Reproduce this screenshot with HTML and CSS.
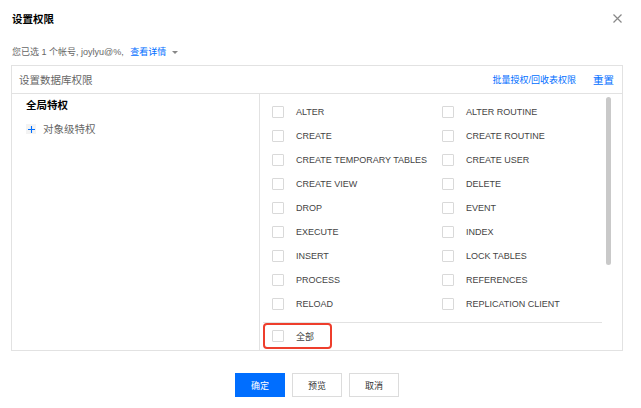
FILE: index.html
```html
<!DOCTYPE html>
<html lang="zh-CN">
  <head>
    <meta charset="UTF-8" />
    <meta name="viewport" content="width=device-width, initial-scale=1.0" />
    <title>设置权限</title>
    <link rel="stylesheet" href="styles.css">
  </head>

  <body>
    <div class="dialog">
      <header class="dialog-head">
        <h1 class="dialog-title">设置权限</h1>
        <button class="close-btn" type="button" aria-label="关闭">
          <svg width="9" height="9" viewBox="0 0 9 9">
            <path d="M0.5 0.5 L8.5 8.5 M8.5 0.5 L0.5 8.5" stroke="#888" stroke-width="1.2" fill="none" />
          </svg>
        </button>
      </header>

      <p class="account-info">
        您已选 1 个帐号, joylyu@%,
        <a href="#">查看详情</a>
        <span class="caret"></span>
      </p>

      <section class="perm-box">
        <div class="perm-box-head">
          <span>设置数据库权限</span>
          <div class="head-links">
            <a class="link-sm" href="#">批量授权/回收表权限</a>
            <a href="#">重置</a>
          </div>
        </div>

        <div class="perm-box-body">
          <!-- 左侧：权限层级 -->
          <aside class="perm-tree">
            <div class="tree-item tree-item--active">全局特权</div>
            <div class="tree-item">
              <span class="expand-icon">
                <svg width="9" height="9" viewBox="0 0 9 9">
                  <path d="M4.5 1 V8 M1 4.5 H8" stroke="#006eff" stroke-width="1.1" fill="none" />
                </svg>
              </span>
              对象级特权
            </div>
          </aside>

          <!-- 右侧：权限列表 -->
          <div class="perm-panel">
            <div class="perm-scroll">
              <ul class="perm-list">
                <li><span class="checkbox"></span>ALTER</li>
                <li><span class="checkbox"></span>ALTER ROUTINE</li>
                <li><span class="checkbox"></span>CREATE</li>
                <li><span class="checkbox"></span>CREATE ROUTINE</li>
                <li><span class="checkbox"></span>CREATE TEMPORARY TABLES</li>
                <li><span class="checkbox"></span>CREATE USER</li>
                <li><span class="checkbox"></span>CREATE VIEW</li>
                <li><span class="checkbox"></span>DELETE</li>
                <li><span class="checkbox"></span>DROP</li>
                <li><span class="checkbox"></span>EVENT</li>
                <li><span class="checkbox"></span>EXECUTE</li>
                <li><span class="checkbox"></span>INDEX</li>
                <li><span class="checkbox"></span>INSERT</li>
                <li><span class="checkbox"></span>LOCK TABLES</li>
                <li><span class="checkbox"></span>PROCESS</li>
                <li><span class="checkbox"></span>REFERENCES</li>
                <li><span class="checkbox"></span>RELOAD</li>
                <li><span class="checkbox"></span>REPLICATION CLIENT</li>
              </ul>
            </div>
            <div class="scroll-thumb"></div>
            <div class="perm-all">
              <label class="all-item"><span class="checkbox"></span>全部</label>
            </div>
          </div>
        </div>
      </section>

      <footer class="dialog-foot">
        <button class="btn btn-primary" type="button">确定</button>
        <button class="btn" type="button">预览</button>
        <button class="btn" type="button">取消</button>
      </footer>
    </div>
  </body>
</html>
```

FILE: styles.css
```css
*,
*::before,
*::after {
  box-sizing: border-box;
}
:root {
  --primary: #006eff;
  --text: #000;
  --text-body: #444;
  --text-light: #666;
  --border: #e2e2e2;
  --checkbox: #d9d9d9;
  --mark: #ee3e2c;
}
body {
  margin: 0;
  font-family: "Liberation Sans", "Noto Sans CJK SC", sans-serif;
  background: #fff;
  color: var(--text-body);
}
a {
  color: var(--primary);
  text-decoration: none;
}
ul {
  margin: 0;
  padding: 0;
  list-style: none;
}
button {
  font-family: inherit;
}

.dialog {
  padding: 10px 18px 0 11px;
}
.dialog-head {
  display: flex;
  justify-content: space-between;
  align-items: center;
  height: 16px;
}
.dialog-title {
  margin: 0 0 0 1px;
  font-size: 10.5px;
  font-weight: 700;
  color: var(--text);
}
.close-btn {
  display: flex;
  padding: 0;
  margin-right: 1px;
  border: 0;
  background: none;
}

.account-info {
  margin: 19px 0 0 1px;
  font-size: 9px;
  line-height: 14px;
  color: var(--text-light);
}
.account-info a {
  margin-left: 4px;
}
.caret {
  display: inline-block;
  margin-left: 3px;
  border-left: 3px solid transparent;
  border-right: 3px solid transparent;
  border-top: 3.5px solid #888;
  vertical-align: 1px;
}

.perm-box {
  margin-top: 6px;
  border: 1px solid var(--border);
}
.perm-box-head {
  display: flex;
  justify-content: space-between;
  align-items: center;
  height: 28px;
  padding: 0 8px 0 7px;
  border-bottom: 1px solid var(--border);
  font-size: 10.5px;
  color: var(--text-light);
}
.head-links {
  display: flex;
  align-items: center;
  gap: 17px;
}
.link-sm {
  font-size: 9px;
}
.perm-box-body {
  display: flex;
  height: 256px;
}

.perm-tree {
  flex: 0 0 248px;
  padding: 4px 0 0 14px;
  border-right: 1px solid var(--border);
  font-size: 10.5px;
  line-height: 14px;
}
.tree-item {
  display: flex;
  align-items: center;
  color: var(--text-light);
}
.tree-item + .tree-item {
  margin-top: 10px;
}
.tree-item--active {
  font-weight: 700;
  color: var(--text);
}
.expand-icon {
  display: inline-flex;
  justify-content: center;
  align-items: center;
  width: 10px;
  height: 10px;
  margin-right: 7px;
  background: #f3f3f3;
}

.perm-panel {
  position: relative;
  flex: 1;
  display: flex;
  flex-direction: column;
  padding-right: 9px;
}
.perm-scroll {
  height: 228px;
  overflow: hidden;
}
.scroll-thumb {
  position: absolute;
  top: 3px;
  right: 11px;
  width: 5px;
  height: 168px;
  border-radius: 3px;
  background: #c9c9c9;
}
.perm-list {
  display: grid;
  grid-template-columns: 170px 170px;
  padding: 6px 0 0 12px;
}
.perm-list li {
  display: flex;
  align-items: center;
  height: 24px;
  font-size: 9px;
  color: var(--text-body);
}
.checkbox {
  flex: none;
  width: 12px;
  height: 12px;
  margin-right: 12px;
  border: 1px solid var(--checkbox);
  border-radius: 1px;
  background: #fff;
}

.perm-all {
  margin: 0 11px 0 3px;
  border-top: 1px solid var(--border);
}
.all-item {
  display: inline-flex;
  align-items: center;
  width: 69px;
  height: 26px;
  padding-left: 7px;
  border: 2px solid var(--mark);
  border-radius: 4px;
  font-size: 9px;
  color: var(--text-body);
}

.dialog-foot {
  display: flex;
  justify-content: center;
  gap: 7px;
  margin-top: 22px;
}
.btn {
  width: 50px;
  height: 24px;
  padding: 0;
  border: 1px solid #dcdcdc;
  background: #fff;
  color: #333;
  font-size: 9px;
}
.btn-primary {
  border-color: var(--primary);
  background: var(--primary);
  color: #fff;
}
```
